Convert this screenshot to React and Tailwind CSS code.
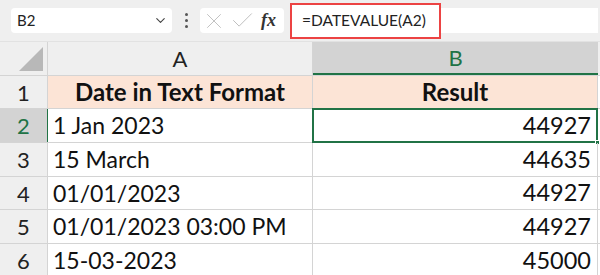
import { ChevronDown, X, Check } from "lucide-react";

const rows = [
  { n: 1, a: "Date in Text Format", b: "Result", head: true, h: "h-[33px]" },
  { n: 2, a: "1 Jan 2023", b: "44927", sel: true, h: "h-[34px]" },
  { n: 3, a: "15 March", b: "44635", h: "h-[34px]" },
  { n: 4, a: "01/01/2023", b: "44927", h: "h-[33px]" },
  { n: 5, a: "01/01/2023 03:00 PM", b: "44927", h: "h-[34px]" },
  { n: 6, a: "15-03-2023", b: "45000", h: "h-[34px]" },
];

const font = { fontFamily: "Lato, 'Open Sans', sans-serif" };

export default function App() {
  return (
    <div className="w-[600px] h-[275px] overflow-hidden bg-white text-[#111]" style={font}>
      {/* formula bar */}
      <div className="h-[42px] bg-[#efefef] flex items-center pl-[11px] border-b border-[#e2e2e2]">
        <div className="w-[161px] h-[25px] bg-white rounded-[4px] flex items-center justify-between pl-[6px] pr-[4px] text-[15px] text-[#222]">
          <span>B2</span>
          <ChevronDown size={15} strokeWidth={1.8} className="text-[#444]" />
        </div>
        <div className="w-[28px] flex flex-col items-center gap-[3px]">
          <span className="w-[3px] h-[3px] rounded-full bg-[#555]" />
          <span className="w-[3px] h-[3px] rounded-full bg-[#555]" />
          <span className="w-[3px] h-[3px] rounded-full bg-[#555]" />
        </div>
        <div className="w-[84px] h-[25px] bg-white rounded-[4px] flex items-center pl-[1px] gap-[2px]">
          <X size={26} strokeWidth={0.8} className="text-[#b8b8b8]" />
          <Check size={27} strokeWidth={0.8} className="text-[#b8b8b8]" />
          <span className="text-[18px] italic font-semibold text-[#333] ml-[3px]" style={{ fontFamily: "'Liberation Serif', serif" }}>fx</span>
        </div>
        <div className="ml-[6px] w-[151px] h-[36px] border-2 border-[#ec4343] bg-white flex items-center pl-[10px] text-[15.5px] text-[#222]">
          =DATEVALUE(A2)
        </div>
        <div className="flex-1 h-[25px] bg-white mr-[2px]" />
      </div>

      {/* column headers */}
      <div className="flex h-[33px] bg-[#efefef]">
        <div className="w-[48px] border-r border-[#d4d4d4] relative">
          <div
            className="absolute right-[4px] bottom-[4px] w-[24px] h-[24px] bg-[#b8b8b8]"
            style={{ clipPath: "polygon(100% 0, 100% 100%, 0 100%)" }}
          />
        </div>
        <div className="w-[265px] border-r border-[#d4d4d4] flex items-center justify-center text-[22px] text-[#222]">A</div>
        <div className="w-[285px] bg-[#d3d3d3] border-b-2 border-[#217346] flex items-center justify-center text-[22px] text-[#217346]">B</div>
      </div>

      {/* rows */}
      {rows.map((r) => (
        <div key={r.n} className={`flex ${r.h} border-t border-[#d4d4d4]`}>
          <div
            className={`w-[48px] flex items-center justify-center text-[22px] border-r ${
              r.sel ? "bg-[#d3d3d3] text-[#217346] border-[#217346]" : "bg-[#efefef] text-[#222] border-[#d4d4d4]"
            }`}
          >
            {r.n}
          </div>
          <div
            className={`w-[265px] flex items-center border-r border-[#d4d4d4] ${
              r.head ? "bg-[#fce4d6] justify-center font-bold text-[24px]" : "pl-[5px] text-[23px]"
            }`}
          >
            {r.a}
          </div>
          <div
            className={`w-[285px] relative flex items-center border-r border-[#d4d4d4] ${
              r.head ? "bg-[#fce4d6] justify-center font-bold text-[24px]" : "justify-end pr-[6px] text-[23.5px]"
            }`}
          >
            {r.sel && (
              <>
                <div className="absolute -top-px -left-px -right-px -bottom-px border-2 border-[#217346]" />
                <div className="absolute -right-[3px] -bottom-[3px] w-[5px] h-[5px] bg-[#217346] border border-white" />
              </>
            )}
            {r.b}
          </div>
        </div>
      ))}
    </div>
  );
}
